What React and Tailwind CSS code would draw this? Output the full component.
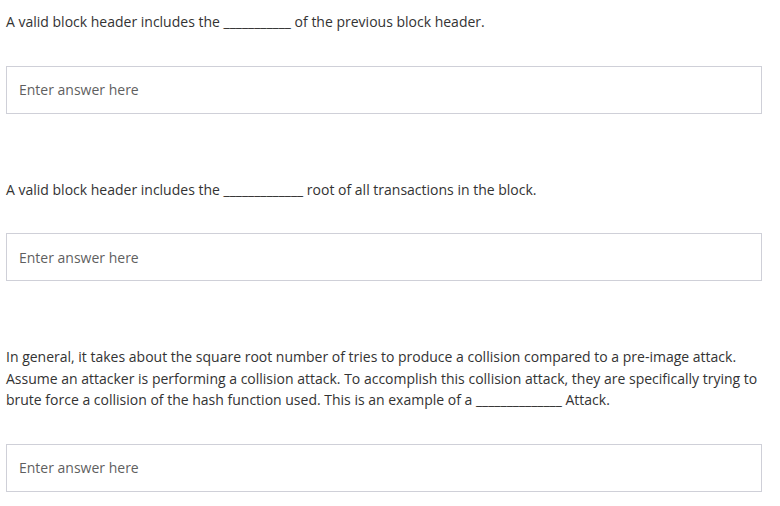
import React from "react";

const questions = [
  {
    id: 1,
    parts: ["A valid block header includes the ", "___________", " of the previous block header."],
  },
  {
    id: 2,
    parts: ["A valid block header includes the ", "_____________", " root of all transactions in the block."],
  },
  {
    id: 3,
    parts: [
      "In general, it takes about the square root number of tries to produce a collision compared to a pre-image attack. Assume an attacker is performing a collision attack. To accomplish this collision attack, they are specifically trying to brute force a collision of the hash function used. This is an example of a ",
      "______________",
      " Attack.",
    ],
  },
];

export default function App() {
  return (
    <div className="min-h-screen bg-white px-[6px] pt-[11px] font-['Open_Sans',sans-serif] text-[14px] text-[#333]">
      {questions.map((q) => (
        <div key={q.id} className="mb-[65px] w-[756px]">
          <p className="leading-[21.5px]">
            {q.parts.join("")}
          </p>
          <input
            type="text"
            placeholder="Enter answer here"
            className="mt-[33px] block h-[48px] w-full border border-[#cfd0d8] bg-white px-[12px] text-[14px] text-[#333] outline-none placeholder:text-[#5f5f5f]"
          />
        </div>
      ))}
    </div>
  );
}
